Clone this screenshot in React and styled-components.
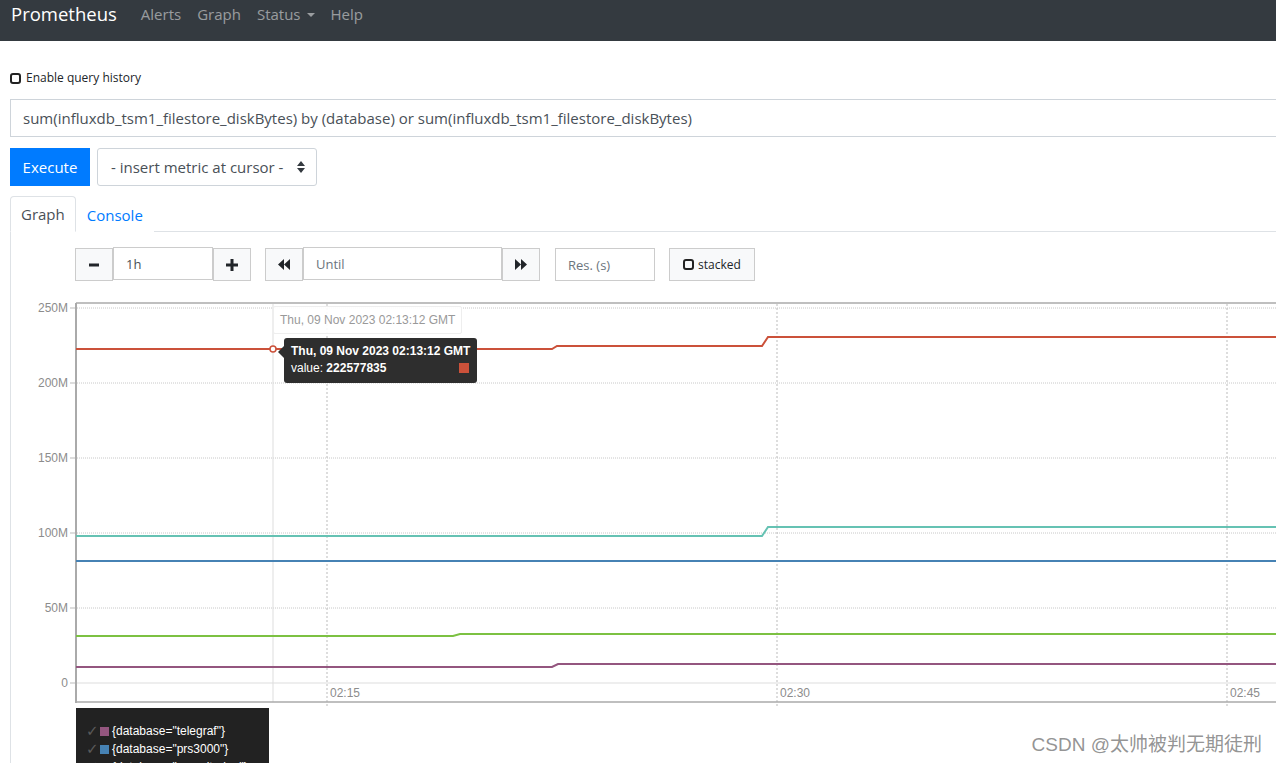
import React from 'react';
import styled, { createGlobalStyle } from 'styled-components';

const GlobalStyle = createGlobalStyle`
  html, body {
    margin: 0;
    padding: 0;
    background: #fff;
    overflow: hidden;
    font-family: "Open Sans", "Noto Sans", sans-serif;
    color: #212529;
  }
  * { box-sizing: border-box; }
`;

const series = [
  { name: '{database="telegraf"}', color: '#94567f', d: 'M76 666 H552 L558 663 H1276' },
  { name: '{database="prs3000"}', color: '#4682b4', d: 'M76 560 H1276' },
  { name: '{database="_monitoring"}', color: '#65c2b3', d: 'M76 535 H762 L768 526 H1276' },
  { name: '{database="_internal"}', color: '#7cc142', d: 'M76 635 H453 L460 633 H1276' },
  { name: '', color: '#cb513a', d: 'M76 348 H552 L557 345 H762 L768 336 H1276' },
];

const yTicks = [
  { label: '250M', y: 307 },
  { label: '200M', y: 382 },
  { label: '150M', y: 457 },
  { label: '100M', y: 532 },
  { label: '50M', y: 607 },
];

const xTicks = [
  { label: '02:15', x: 327 },
  { label: '02:30', x: 777 },
  { label: '02:45', x: 1227 },
];

function App() {
  return (
    <Page>
      <GlobalStyle />
      <NavBar>
        <Brand>Prometheus</Brand>
        <NavLink>Alerts</NavLink>
        <NavLink>Graph</NavLink>
        <NavLink>
          Status <Caret />
        </NavLink>
        <NavLink>Help</NavLink>
      </NavBar>

      <Content>
        <HistoryRow>
          <CheckBox />
          Enable query history
        </HistoryRow>

        <QueryInput>
          sum(influxdb_tsm1_filestore_diskBytes) by (database) or sum(influxdb_tsm1_filestore_diskBytes)
        </QueryInput>

        <ExecuteRow>
          <ExecuteButton>Execute</ExecuteButton>
          <MetricSelect>
            - insert metric at cursor -
            <svg width="8" height="12" viewBox="0 0 8 12">
              <path d="M4 0 L8 5 H0 Z M0 7 H8 L4 12 Z" fill="#343a40" />
            </svg>
          </MetricSelect>
        </ExecuteRow>

        <Tabs>
          <Tab $active>Graph</Tab>
          <Tab>Console</Tab>
        </Tabs>

        <Panel>
          <Controls>
            <Group>
              <CtrlButton>
                <svg width="10" height="10" viewBox="0 0 10 10">
                  <rect x="0" y="3.5" width="10" height="3" fill="#212529" />
                </svg>
              </CtrlButton>
              <CtrlInput $width={100}>1h</CtrlInput>
              <CtrlButton>
                <svg width="12" height="12" viewBox="0 0 12 12">
                  <path d="M4.5 0 H7.5 V4.5 H12 V7.5 H7.5 V12 H4.5 V7.5 H0 V4.5 H4.5 Z" fill="#212529" />
                </svg>
              </CtrlButton>
            </Group>
            <Group>
              <CtrlButton>
                <svg width="12" height="11" viewBox="0 0 12 11">
                  <path d="M6 0 V11 L0 5.5 Z M12 0 V11 L6 5.5 Z" fill="#212529" />
                </svg>
              </CtrlButton>
              <CtrlInput $width={199} $muted>Until</CtrlInput>
              <CtrlButton>
                <svg width="12" height="11" viewBox="0 0 12 11">
                  <path d="M0 0 V11 L6 5.5 Z M6 0 V11 L12 5.5 Z" fill="#212529" />
                </svg>
              </CtrlButton>
            </Group>
            <CtrlInput $width={100} $muted $standalone>Res. (s)</CtrlInput>
            <StackedButton>
              <SmallBox />
              stacked
            </StackedButton>
          </Controls>

          <ChartWrap>
            <svg width="1265" height="417" viewBox="11 290 1265 417">
              <line x1="76" y1="302" x2="1276" y2="302" stroke="#aaa" strokeWidth="1.5" />
              {yTicks.map((t) => (
                <g key={t.label}>
                  <line x1="77" y1={t.y} x2="1276" y2={t.y} stroke="#c8c8c8" strokeDasharray="1 1" />
                  <line x1="70" y1={t.y} x2="76" y2={t.y} stroke="#bbb" />
                  <AxisText x="68" y={t.y + 4} textAnchor="end">{t.label}</AxisText>
                </g>
              ))}
              <line x1="77" y1="682" x2="1276" y2="682" stroke="#ddd" />
              <line x1="70" y1="682" x2="76" y2="682" stroke="#bbb" />
              <AxisText x="68" y="686" textAnchor="end">0</AxisText>

              {xTicks.map((t) => (
                <g key={t.label}>
                  <line x1={t.x} y1="303" x2={t.x} y2="707" stroke="#bbb" strokeDasharray="2 2" />
                  <AxisText x={t.x + 3} y="696">{t.label}</AxisText>
                </g>
              ))}

              <line x1="273" y1="303" x2="273" y2="701" stroke="#ddd" />
              <line x1="76" y1="701" x2="1276" y2="701" stroke="#aaa" strokeWidth="1.5" />
              <line x1="76" y1="302" x2="76" y2="702" stroke="#aaa" strokeWidth="2" />

              {series.map((s) => (
                <path key={s.color} d={s.d} fill="none" stroke={s.color} strokeWidth="2" />
              ))}
              <circle cx="273" cy="348" r="3" fill="#fff" stroke="#cb513a" strokeWidth="1.5" />
            </svg>

            <DateFlag>Thu, 09 Nov 2023 02:13:12 GMT</DateFlag>
            <Tooltip>
              <TipDate>Thu, 09 Nov 2023 02:13:12 GMT</TipDate>
              <TipValue>
                value: <b>222577835</b>
              </TipValue>
              <TipSwatch />
            </Tooltip>
          </ChartWrap>

          <Legend>
            {series.slice(0, 4).map((s) => (
              <LegendItem key={s.color}>
                <Check>✓</Check>
                <Swatch $color={s.color} />
                {s.name}
              </LegendItem>
            ))}
          </Legend>
        </Panel>
      </Content>

      <Watermark>CSDN @太帅被判无期徒刑</Watermark>
    </Page>
  );
}

const Page = styled.div`
  position: relative;
  width: 1276px;
  height: 763px;
  overflow: hidden;
`;

const NavBar = styled.nav`
  display: flex;
  align-items: flex-start;
  height: 41px;
  background: #343a40;
  padding: 2px 0 0 11px;
`;

const Brand = styled.div`
  font-size: 18.5px;
  color: #fff;
  line-height: 24px;
  margin-right: 16px;
`;

const NavLink = styled.div`
  display: flex;
  align-items: center;
  gap: 6px;
  font-size: 15px;
  line-height: 24px;
  color: rgba(255, 255, 255, 0.5);
  padding: 0 8px;
`;

const Caret = styled.span`
  width: 0;
  height: 0;
  border-left: 4px solid transparent;
  border-right: 4px solid transparent;
  border-top: 4px solid rgba(255, 255, 255, 0.5);
  margin-top: 1px;
`;

const Content = styled.div`
  padding: 29px 0 0 10px;
`;

const HistoryRow = styled.div`
  display: flex;
  align-items: center;
  gap: 5px;
  font-size: 12px;
  line-height: 16px;
  color: #212529;
`;

const CheckBox = styled.span`
  width: 11px;
  height: 11px;
  border: 2px solid #222;
  border-radius: 3px;
`;

const QueryInput = styled.div`
  margin-top: 13px;
  width: 1300px;
  height: 38px;
  border: 1px solid #ced4da;
  padding: 0 12px;
  display: flex;
  align-items: center;
  font-size: 15px;
  color: #495057;
  white-space: nowrap;
`;

const ExecuteRow = styled.div`
  display: flex;
  gap: 7px;
  margin-top: 11px;
`;

const ExecuteButton = styled.div`
  width: 80px;
  height: 38px;
  background: #007bff;
  color: #fff;
  font-size: 15px;
  display: flex;
  align-items: center;
  justify-content: center;
`;

const MetricSelect = styled.div`
  width: 220px;
  height: 38px;
  border: 1px solid #ced4da;
  border-radius: 3px;
  display: flex;
  align-items: center;
  justify-content: space-between;
  padding: 0 11px 0 13px;
  font-size: 15px;
  color: #495057;
`;

const Tabs = styled.div`
  display: flex;
  margin-top: 10px;
  border-bottom: 1px solid #dee2e6;
  height: 36px;
`;

const Tab = styled.div`
  display: flex;
  align-items: center;
  padding: 0 10px;
  font-size: 15px;
  height: 36px;
  color: ${({ $active }) => ($active ? '#495057' : '#007bff')};
  border: 1px solid ${({ $active }) => ($active ? '#dee2e6' : 'transparent')};
  border-bottom: ${({ $active }) => ($active ? '1px solid #fff' : 'none')};
  border-radius: 4px 4px 0 0;
  background: #fff;
  margin-bottom: -1px;
`;

const Panel = styled.div`
  border-left: 1px solid #dee2e6;
  padding-top: 15px;
  height: 600px;
`;

const Controls = styled.div`
  display: flex;
  align-items: flex-start;
  gap: 14px;
  padding-left: 64px;
`;

const Group = styled.div`
  display: flex;
`;

const CtrlButton = styled.div`
  width: 38px;
  height: 33px;
  margin-top: 1px;
  background: #f8f9fa;
  border: 1px solid #ccc;
  display: flex;
  align-items: center;
  justify-content: center;
`;

const CtrlInput = styled.div`
  width: ${({ $width }) => $width}px;
  height: 33px;
  margin-top: ${({ $standalone }) => ($standalone ? '1px' : '0')};
  margin-left: ${({ $standalone }) => ($standalone ? '1px' : '0')};
  border: 1px solid #ccc;
  display: flex;
  align-items: center;
  padding: 0 12px;
  font-size: 13px;
  color: ${({ $muted }) => ($muted ? '#6c757d' : '#495057')};
  background: #fff;
`;

const StackedButton = styled.div`
  height: 33px;
  margin-top: 1px;
  width: 86px;
  background: #f8f9fa;
  border: 1px solid #ccc;
  display: flex;
  align-items: center;
  justify-content: center;
  gap: 4px;
  font-size: 12px;
  color: #212529;
`;

const SmallBox = styled.span`
  width: 11px;
  height: 11px;
  border: 2px solid #222;
  border-radius: 3px;
`;

const ChartWrap = styled.div`
  position: relative;
  margin-top: 10px;
  width: 1265px;
  height: 417px;
  svg { display: block; }
`;

const AxisText = styled.text`
  font-family: "Liberation Sans", Arial, sans-serif;
  font-size: 12px;
  fill: #8c8c8c;
`;

const DateFlag = styled.div`
  position: absolute;
  left: 262px;
  top: 15px;
  height: 28px;
  padding: 0 6px;
  display: flex;
  align-items: center;
  background: rgba(255, 255, 255, 0.9);
  border: 1px solid #eee;
  border-radius: 2px;
  font-family: "Liberation Sans", Arial, sans-serif;
  font-size: 12px;
  color: #999;
`;

const Tooltip = styled.div`
  position: absolute;
  left: 273px;
  top: 47px;
  min-width: 188px;
  height: 45px;
  padding: 5px 7px;
  background: #2e2e2e;
  border-radius: 3px;
  font-family: "Liberation Sans", Arial, sans-serif;
  font-size: 12px;
  color: #fff;
  line-height: 17px;
  white-space: nowrap;
  &::before {
    content: '';
    position: absolute;
    left: -6px;
    top: 8px;
    border-top: 6px solid transparent;
    border-bottom: 6px solid transparent;
    border-right: 6px solid #2e2e2e;
  }
`;

const TipDate = styled.div`
  font-weight: bold;
`;

const TipValue = styled.div`
  b { font-weight: bold; }
`;

const TipSwatch = styled.span`
  position: absolute;
  right: 8px;
  bottom: 10px;
  width: 10px;
  height: 10px;
  background: #cb513a;
`;

const Legend = styled.div`
  margin-left: 65px;
  width: 193px;
  background: #222;
  padding: 14px 10px 0 10px;
`;

const LegendItem = styled.div`
  display: flex;
  align-items: center;
  font-family: "Liberation Sans", Arial, sans-serif;
  font-size: 12px;
  line-height: 18px;
  color: #fff;
  white-space: nowrap;
`;

const Check = styled.span`
  color: #5a5a5a;
  width: 14px;
  font-size: 15px;
  font-family: "DejaVu Sans", sans-serif;
`;

const Swatch = styled.span`
  width: 9px;
  height: 9px;
  background: ${({ $color }) => $color};
  margin-right: 3px;
`;

const Watermark = styled.div`
  position: absolute;
  right: 14px;
  bottom: 7px;
  font-family: "Liberation Sans", "Noto Sans CJK SC", sans-serif;
  font-size: 19px;
  color: rgba(120, 120, 120, 0.8);
`;

export default App;
